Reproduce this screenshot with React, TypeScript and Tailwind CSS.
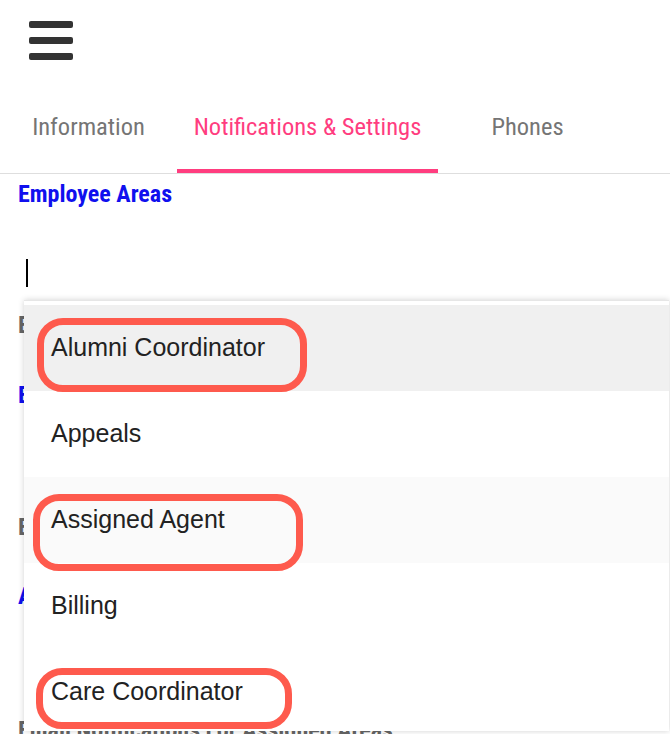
import React from 'react';

const narrow = "font-['Roboto_Condensed','Roboto',sans-serif] font-stretch-condensed whitespace-nowrap";

const tabs = [
  { label: 'Information', width: 'w-[177px]', active: false },
  { label: 'Notifications & Settings', width: 'w-[261px]', active: true },
  { label: 'Phones', width: 'w-[179px]', active: false },
];

const options = [
  { label: 'Alumni Coordinator', bg: 'bg-[#f0f0f0]' },
  { label: 'Appeals', bg: 'bg-white' },
  { label: 'Assigned Agent', bg: 'bg-[#fafafa]' },
  { label: 'Billing', bg: 'bg-white' },
  { label: 'Care Coordinator', bg: 'bg-white' },
];

export default function App() {
  return (
    <div className="relative h-[734px] w-[670px] overflow-hidden bg-white font-['Liberation_Sans',Arial,sans-serif]">
      {/* top bar */}
      <header className="h-[80px] pl-[29px] pt-[21px]">
        <div className="flex w-[44px] flex-col gap-[9.5px]">
          <span className="h-[6.5px] rounded-[2px] bg-[#333]" />
          <span className="h-[6.5px] rounded-[2px] bg-[#333]" />
          <span className="h-[6.5px] rounded-[2px] bg-[#333]" />
        </div>
      </header>

      <nav className="flex h-[94px] border-b border-[#dedede]">
        {tabs.map((t) => (
          <div key={t.label} className={`relative flex justify-center pt-[32px] ${t.width}`}>
            <span className={`${narrow} text-[24.5px] leading-[30px] ${t.active ? 'text-[#ff3d7f]' : 'text-[#757575]'}`}>
              {t.label}
            </span>
            {t.active && <span className="absolute bottom-0 left-0 right-0 h-[4px] bg-[#ff3d7f]" />}
          </div>
        ))}
      </nav>

      {/* form behind the dropdown */}
      <section className={`${narrow} pl-[18px]`}>
        <h2 className="mt-[6px] text-[24px] font-bold leading-[28px] text-[#1010ee]">Employee Areas</h2>
        <div className="mt-[51px] pl-[8px]">
          <div className="h-[28px] w-[2px] bg-black" />
        </div>
        <p className="mt-[24px] text-[24px] font-bold leading-[28px] text-[#666]">Email Notifications</p>
        <h2 className="mt-[42px] text-[24px] font-bold leading-[28px] text-[#1010ee]">Employee Alerts</h2>
        <p className="mt-[104px] text-[24px] font-bold leading-[28px] text-[#666]">Escalation Contacts</p>
        <h2 className="mt-[41px] text-[24px] font-bold leading-[28px] text-[#1010ee]">Auto Assignment</h2>
        <p className="mt-[106px] text-[24px] font-bold leading-[28px] text-[#666]">Email Notifications For Assigned Areas</p>
      </section>

      {/* open dropdown */}
      <div className="absolute left-[24px] top-[300px] h-[431px] w-[645px] overflow-hidden border-t border-[#e6e6e6] bg-white pt-[4px] shadow-[0_0_6px_rgba(0,0,0,0.18)]">
        {options.map((o) => (
          <div key={o.label} className={`flex h-[86px] items-center pl-[27px] text-[25px] text-[#222] ${o.bg}`}>
            {o.label}
          </div>
        ))}
      </div>

      {/* red annotation outlines */}
      <div className="pointer-events-none absolute left-[37px] top-[318px] h-[74px] w-[270px] rounded-[26px] border-[7px] border-[#fe5a4d]" />
      <div className="pointer-events-none absolute left-[33px] top-[494px] h-[77px] w-[270px] rounded-[26px] border-[7px] border-[#fe5a4d]" />
      <div className="pointer-events-none absolute left-[36px] top-[668px] h-[61px] w-[256px] rounded-[26px] border-[7px] border-[#fe5a4d]" />
    </div>
  );
}
